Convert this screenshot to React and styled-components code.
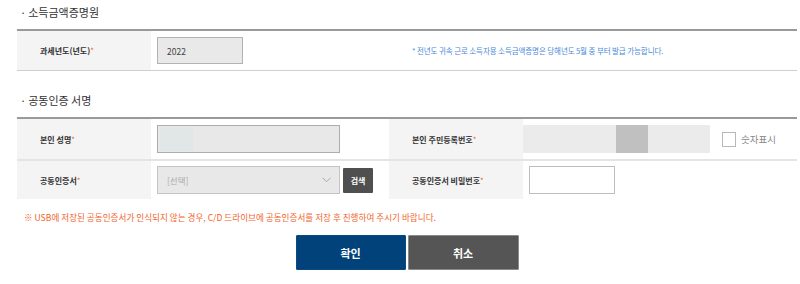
import React from "react";
import styled, { createGlobalStyle } from "styled-components";

const Global = createGlobalStyle`
  html, body { margin: 0; padding: 0; background: #fff; }
  body { font-family: "Noto Sans CJK KR", "Noto Sans", sans-serif; color: #333; }
  * { box-sizing: border-box; }
`;

const Page = styled.div`
  width: 800px;
  padding: 2px 3px 0 17px;
`;

const SectionTitle = styled.h2`
  margin: ${(p) => p.$mt || 0}px 0 7px 0;
  padding-left: 3px;
  height: 20px;
  line-height: 20px;
  font-size: 11px;
  font-weight: 400;
  color: #333;
  &::before {
    content: "·";
    margin-right: 2px;
  }
`;

const Table = styled.div`
  display: grid;
  grid-template-columns: 134px 238px 134px 1fr;
  width: 780px;
  border-top: 2px solid #9a9a9a;
  border-bottom: ${(p) => (p.$bottom ? "1px solid #cfcfcf" : "none")};
`;

const Row = styled.div`
  display: contents;
`;

const Label = styled.div`
  background: #f4f4f4;
  height: ${(p) => p.$h || 40}px;
  display: flex;
  align-items: center;
  padding-left: 23px;
  font-size: 8px;
  font-weight: 700;
  color: #333;
  border-top: ${(p) => (p.$sep ? "2px solid #e4e4e4" : "none")};
`;

const Req = styled.span`
  color: #f0642c;
  font-weight: 400;
`;

const Value = styled.div`
  grid-column: ${(p) => (p.$span ? `span ${p.$span}` : "auto")};
  display: flex;
  align-items: center;
  gap: ${(p) => p.$gap || 0}px;
  padding-left: ${(p) => (p.$pl !== undefined ? p.$pl : 6)}px;
  border-top: ${(p) => (p.$sep ? "2px solid #e4e4e4" : "none")};
`;

const Field = styled.div`
  width: ${(p) => p.$w}px;
  height: ${(p) => p.$h || 28}px;
  background: ${(p) => p.$bg || "#e9e9e9"};
  border: 1px solid ${(p) => p.$bc || "#b2b2b2"};
  display: flex;
  align-items: center;
  padding-left: ${(p) => p.$pl || 9}px;
  font-size: 8.5px;
  color: ${(p) => p.$color || "#444"};
  position: relative;
`;

const Autofill = styled.span`
  width: 33px;
  height: 24px;
  margin-left: -7px;
  background: #e1e7e7;
`;

const Chevron = styled.svg`
  position: absolute;
  right: 8px;
  top: 50%;
  margin-top: -3px;
`;

const SearchButton = styled.button`
  width: 30px;
  height: 25px;
  border: none;
  border-radius: 1px;
  background: #4f4f4f;
  color: #fff;
  font-family: inherit;
  font-size: 8px;
  font-weight: 700;
  padding: 0;
`;

const Note = styled.div`
  padding-left: 23px;
  font-size: 7.5px;
  color: #4a8ad8;
  letter-spacing: -0.1px;
  white-space: nowrap;
`;

const SecureField = styled.div`
  width: 187px;
  height: 28px;
  background: #ebebeb;
  display: flex;
  padding-left: 93px;
`;

const SecureBlock = styled.span`
  width: 32px;
  height: 28px;
  background: #c0c0c0;
`;

const CheckLabel = styled.label`
  display: flex;
  align-items: center;
  gap: 5px;
  font-size: 9.5px;
  color: #888;
`;

const Box = styled.span`
  width: 14px;
  height: 15px;
  border: 1px solid #b8b8b8;
  background: #fff;
`;

const Warning = styled.p`
  margin: 11px 0 0 7px;
  height: 14px;
  line-height: 14px;
  font-size: 8.6px;
  color: #f0642c;
  white-space: nowrap;
`;

const Buttons = styled.div`
  display: flex;
  justify-content: center;
  gap: 2px;
  width: 780px;
  margin-top: 11px;
`;

const ActionButton = styled.button`
  width: ${(p) => p.$w}px;
  height: 35px;
  border: 1px solid ${(p) => (p.$primary ? "#0b4a80" : "#8a8a8a")};
  background: ${(p) => (p.$primary ? "#01427a" : "#555555")};
  color: #fff;
  font-family: inherit;
  font-size: 11px;
  font-weight: 700;
  border-radius: 1px;
`;

export default function App() {
  return (
    <>
      <Global />
      <Page>
        <SectionTitle>소득금액증명원</SectionTitle>
        <Table $bottom>
          <Row>
            <Label $h={39}>
              과세년도(년도)<Req>*</Req>
            </Label>
            <Value>
              <Field $w={86} $h={27}>2022</Field>
            </Value>
            <Value $span={2} $pl={0}>
              <Note>* 전년도 귀속 근로 소득자용 소득금액증명은 당해년도 5월 중 부터 발급 가능합니다.</Note>
            </Value>
          </Row>
        </Table>

        <SectionTitle $mt={19}>공동인증 서명</SectionTitle>
        <Table>
          <Row>
            <Label>
              본인 성명<Req>*</Req>
            </Label>
            <Value>
              <Field $w={183} $bg="#e8e8e8" $bc="#adadad">
                <Autofill />
              </Field>
            </Value>
            <Label>
              본인 주민등록번호<Req>*</Req>
            </Label>
            <Value $pl={0} $gap={12}>
              <SecureField>
                <SecureBlock />
              </SecureField>
              <CheckLabel>
                <Box />
                숫자표시
              </CheckLabel>
            </Value>
          </Row>
          <Row>
            <Label $sep>
              공동인증서<Req>*</Req>
            </Label>
            <Value $sep $gap={3}>
              <Field $w={183} $bg="#e8e8e8" $bc="#c4c4c4" $color="#aaa">
                [선택]
                <Chevron width="9" height="6" viewBox="0 0 9 6">
                  <polyline points="0.5,0.8 4.5,4.8 8.5,0.8" fill="none" stroke="#a8a8a8" strokeWidth="1" />
                </Chevron>
              </Field>
              <SearchButton>검색</SearchButton>
            </Value>
            <Label $sep>
              공동인증서 비밀번호<Req>*</Req>
            </Label>
            <Value $sep>
              <Field $w={86} $bg="#fff" $bc="#bdbdbd" />
            </Value>
          </Row>
        </Table>

        <Warning>※ USB에 저장된 공동인증서가 인식되지 않는 경우, C/D 드라이브에 공동인증서를 저장 후 진행하여 주시기 바랍니다.</Warning>

        <Buttons>
          <ActionButton $primary $w={110}>확인</ActionButton>
          <ActionButton $w={111}>취소</ActionButton>
        </Buttons>
      </Page>
    </>
  );
}
